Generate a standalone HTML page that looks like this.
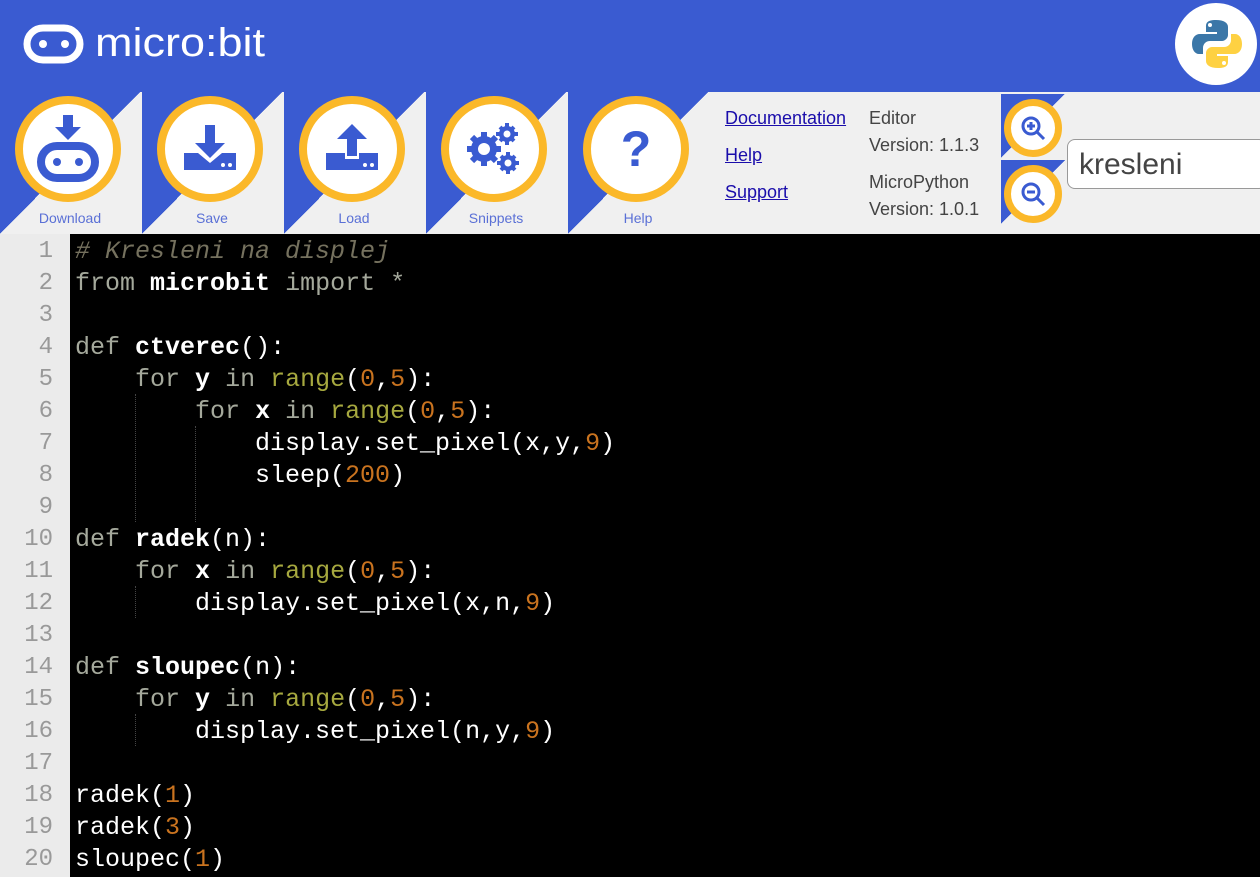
<!DOCTYPE html>
<html><head><meta charset="utf-8"><style>
*{margin:0;padding:0;box-sizing:border-box}
body{width:1260px;height:877px;overflow:hidden;background:#f0f0f0;font-family:"Liberation Sans",sans-serif;position:relative}
.top{position:absolute;left:0;top:0;width:1260px;height:92px;background:#3a5bd1}
.cell{position:absolute;top:92px;width:140px;height:142px;background:linear-gradient(to bottom right,#3a5bd1 50%,#f0f0f0 50%)}
.circ{position:absolute;width:106px;height:106px;border-radius:50%;background:#fff;border:8px solid #fbb829;left:15px;top:4px;display:flex;align-items:center;justify-content:center}
.lbl{position:absolute;top:118px;width:140px;text-align:center;font-size:14px;color:#5a70d6}
.links a{position:absolute;left:725px;font-size:18px;color:#1a0dab;text-decoration:underline}
.ver{position:absolute;left:869px;font-size:18px;color:#444}
.zc{position:absolute;left:1001px;width:64px;height:64px;background:linear-gradient(to bottom right,#3a5bd1 50%,transparent 50%)}
.zci{position:absolute;left:3px;top:5px;width:58px;height:58px;border-radius:50%;background:#fff;border:7px solid #fbb829;display:flex;align-items:center;justify-content:center}
.search{position:absolute;left:1067px;top:139px;width:200px;height:50px;background:#fff;border:1px solid #999;border-radius:8px;font-size:30px;color:#444;padding:8px 11px}
.ed{position:absolute;top:234px;left:0;width:1260px;height:643px;background:#000}
.gut{position:absolute;left:0;top:0;width:70px;height:643px;background:#ebebeb}
.ln{font-family:"Liberation Mono",monospace;font-size:25px;line-height:32px;position:absolute;white-space:pre;top:2px}
.gut .ln{right:17px;text-align:right;color:#999;font-size:24px}
.code{left:75px;color:#fff}
.c{color:#75715e;font-style:italic}.k{color:#a5a99c}.n{color:#fff;font-weight:bold}.r{color:#a6a83f}.o{color:#c9731f}.p{color:#fff}
.g{position:absolute;width:0;border-left:1px dotted #444}
</style></head><body>
<div class="top"></div>
<svg style="position:absolute;left:23px;top:22px" width="260" height="42" viewBox="0 0 260 42">
<rect x="4" y="6" width="53" height="32" rx="16" fill="none" stroke="#fff" stroke-width="7"/>
<circle cx="20" cy="22" r="4" fill="#fff"/><circle cx="42" cy="22" r="4" fill="#fff"/>
<text x="72" y="34" fill="#fff" font-family="Liberation Sans" font-size="40" textLength="170" lengthAdjust="spacingAndGlyphs">micro:bit</text>
</svg>
<div style="position:absolute;left:1175px;top:3px;width:82px;height:82px;border-radius:50%;background:#fff"></div>
<svg style="position:absolute;left:1191px;top:18px" width="52" height="52" viewBox="0 0 52 52">
<path d="M25 2c-10 0-10 4-10 7v5h11v2H9c-5 0-8 4-8 10s3 10 7 10h4v-6c0-4 3-7 7-7h12c3 0 6-3 6-6V9c0-4-4-7-12-7z" fill="#3b77a8"/>
<circle cx="19" cy="7" r="2" fill="#fff"/>
<path d="M27 50c10 0 10-4 10-7v-5H26v-2h17c5 0 8-4 8-10s-3-10-7-10h-4v6c0 4-3 7-7 7H21c-3 0-6 3-6 6v8c0 4 4 7 12 7z" fill="#fed142"/>
<circle cx="33" cy="45" r="2" fill="#fff"/>
</svg>

<div class="cell" style="left:0"><div class="circ"><svg width="64" height="72" viewBox="0 0 64 72"><path d="M27 2h10v12h8L32 27 19 14h8z" fill="#3a5bd1"/><rect x="5" y="33" width="54" height="32" rx="16" fill="none" stroke="#3a5bd1" stroke-width="8"/><circle cx="21" cy="49" r="4" fill="#3a5bd1"/><circle cx="43" cy="49" r="4" fill="#3a5bd1"/></svg></div><div class="lbl">Download</div></div>
<div class="cell" style="left:142px"><div class="circ"><svg width="56" height="56" viewBox="0 0 56 56"><path d="M23 4h10v18h10L28 37 13 22h10z" fill="#3a5bd1"/><path d="M2 32h14l12 10 12-10h14v17H2z" fill="#3a5bd1"/><circle cx="41" cy="44" r="2" fill="#fff"/><circle cx="48" cy="44" r="2" fill="#fff"/></svg></div><div class="lbl">Save</div></div>
<div class="cell" style="left:284px"><div class="circ"><svg width="56" height="56" viewBox="0 0 56 56"><path d="M28 3l15 15H33v17H23V18H13z" fill="#3a5bd1"/><path d="M2 32h19v6h14v-6h19v17H2z" fill="#3a5bd1"/><circle cx="41" cy="44" r="2" fill="#fff"/><circle cx="48" cy="44" r="2" fill="#fff"/></svg></div><div class="lbl">Load</div></div>
<div class="cell" style="left:426px"><div class="circ"><svg width="58" height="58" viewBox="0 0 58 58"><g fill="#3a5bd1"><circle cx="19" cy="29" r="13"/><circle cx="42" cy="14" r="8"/><circle cx="43" cy="43" r="8"/></g><g stroke="#3a5bd1" stroke-width="6"><path d="M19 12v34M2 29h34M7 17l24 24M31 17L7 41"/></g><g stroke="#3a5bd1" stroke-width="4"><path d="M42 3v22M31 14h22M35 7l14 14M49 7L35 21M43 32v22M32 43h22M36 36l14 14M50 36L36 50"/></g><g fill="#fff"><circle cx="19" cy="29" r="6"/><circle cx="42" cy="14" r="3.5"/><circle cx="43" cy="43" r="3.5"/></g></svg></div><div class="lbl">Snippets</div></div>
<div class="cell" style="left:568px"><div class="circ"><span style="font-size:50px;font-weight:bold;color:#3a5bd1">?</span></div><div class="lbl">Help</div></div>

<div class="links"><a style="top:108px">Documentation</a><a style="top:145px">Help</a><a style="top:182px">Support</a></div>
<div class="ver" style="top:108px">Editor</div><div class="ver" style="top:135px">Version: 1.1.3</div>
<div class="ver" style="top:172px">MicroPython</div><div class="ver" style="top:199px">Version: 1.0.1</div>

<div class="zc" style="top:94px"><div class="zci"><svg width="26" height="26" viewBox="0 0 26 26"><circle cx="11" cy="11" r="8" fill="none" stroke="#3a5bd1" stroke-width="3"/><path d="M17 17l7 7M7 11h8M11 7v8" stroke="#3a5bd1" stroke-width="3"/></svg></div></div>
<div class="zc" style="top:160px"><div class="zci"><svg width="26" height="26" viewBox="0 0 26 26"><circle cx="11" cy="11" r="8" fill="none" stroke="#3a5bd1" stroke-width="3"/><path d="M17 17l7 7M7 11h8" stroke="#3a5bd1" stroke-width="3"/></svg></div></div>
<div class="search">kresleni</div>

<div class="ed">
<div class="gut"><div class="ln">1
2
3
4
5
6
7
8
9
10
11
12
13
14
15
16
17
18
19
20</div></div>
<div class="g" style="left:135px;top:160px;height:128px"></div>
<div class="g" style="left:195px;top:192px;height:96px"></div>
<div class="g" style="left:135px;top:352px;height:32px"></div>
<div class="g" style="left:135px;top:480px;height:32px"></div>
<div class="ln code"><span class="c"># Kresleni na displej</span>
<span class="k">from</span> <span class="n">microbit</span> <span class="k">import</span> <span class="k">*</span>

<span class="k">def</span> <span class="n">ctverec</span><span class="p">():</span>
    <span class="k">for</span> <span class="n">y</span> <span class="k">in</span> <span class="r">range</span>(<span class="o">0</span>,<span class="o">5</span>):
        <span class="k">for</span> <span class="n">x</span> <span class="k">in</span> <span class="r">range</span>(<span class="o">0</span>,<span class="o">5</span>):
            display.set_pixel(x,y,<span class="o">9</span>)
            sleep(<span class="o">200</span>)

<span class="k">def</span> <span class="n">radek</span>(n):
    <span class="k">for</span> <span class="n">x</span> <span class="k">in</span> <span class="r">range</span>(<span class="o">0</span>,<span class="o">5</span>):
        display.set_pixel(x,n,<span class="o">9</span>)

<span class="k">def</span> <span class="n">sloupec</span>(n):
    <span class="k">for</span> <span class="n">y</span> <span class="k">in</span> <span class="r">range</span>(<span class="o">0</span>,<span class="o">5</span>):
        display.set_pixel(n,y,<span class="o">9</span>)

radek(<span class="o">1</span>)
radek(<span class="o">3</span>)
sloupec(<span class="o">1</span>)</div>
</div>
</body></html>
